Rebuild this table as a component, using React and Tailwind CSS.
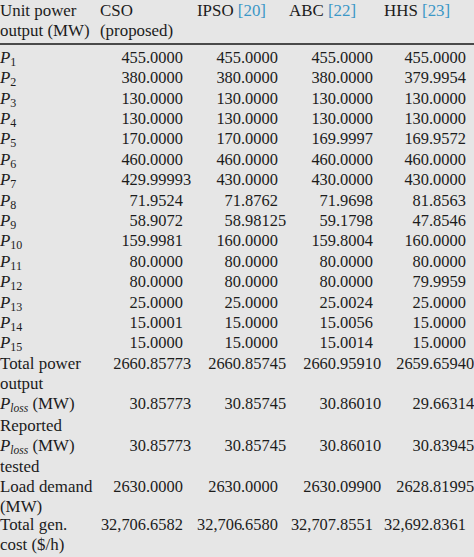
const cols = [
  { left: 100, int: 46 },
  { left: 197, int: 44 },
  { left: 289, int: 47 },
  { left: 384, int: 45 },
];

const rows = [
  ["1", "455.0000", "455.0000", "455.0000", "455.0000"],
  ["2", "380.0000", "380.0000", "380.0000", "379.9954"],
  ["3", "130.0000", "130.0000", "130.0000", "130.0000"],
  ["4", "130.0000", "130.0000", "130.0000", "130.0000"],
  ["5", "170.0000", "170.0000", "169.9997", "169.9572"],
  ["6", "460.0000", "460.0000", "460.0000", "460.0000"],
  ["7", "429.99993", "430.0000", "430.0000", "430.0000"],
  ["8", "71.9524", "71.8762", "71.9698", "81.8563"],
  ["9", "58.9072", "58.98125", "59.1798", "47.8546"],
  ["10", "159.9981", "160.0000", "159.8004", "160.0000"],
  ["11", "80.0000", "80.0000", "80.0000", "80.0000"],
  ["12", "80.0000", "80.0000", "80.0000", "79.9959"],
  ["13", "25.0000", "25.0000", "25.0024", "25.0000"],
  ["14", "15.0001", "15.0000", "15.0056", "15.0000"],
  ["15", "15.0000", "15.0000", "15.0014", "15.0000"],
];

function Num({ value, col }) {
  const [a, b] = value.split(".");
  return (
    <div className="flex whitespace-nowrap text-[16.4px]" style={{ width: col.int + 60 }}>
      <span className="text-right" style={{ width: col.int }}>{a}</span>
      <span>.{b}</span>
    </div>
  );
}

function Values({ values }) {
  return (
    <div className="flex">
      {values.map((v, i) => (
        <div
          key={i}
          className="shrink-0"
          style={{ width: i < 3 ? cols[i + 1].left - cols[i].left : 90 }}
        >
          <Num value={v} col={cols[i]} />
        </div>
      ))}
    </div>
  );
}

function Ref({ n }) {
  return <span className="text-[#3b97c6]">[{n}]</span>;
}

function Ploss() {
  return (
    <>
      <i>P</i>
      <i className="text-[11.5px] leading-none relative top-[3px]">loss</i> (MW)
    </>
  );
}

export default function App() {
  return (
    <div className="w-[474px] h-[557px] bg-[#e6e6e6] text-[#1c1c1c] text-[16.9px] leading-[20.4px] overflow-hidden font-['Liberation_Serif','Times_New_Roman',serif]">
      <div className="flex pt-[1px] pb-[1px] whitespace-nowrap">
        <div className="w-[100px] shrink-0">
          <div>Unit power</div>
          <div>output (MW)</div>
        </div>
        <div className="w-[97px] shrink-0">
          <div>CSO</div>
          <div>(proposed)</div>
        </div>
        <div className="w-[92px] shrink-0">
          IPSO <Ref n="20" />
        </div>
        <div className="w-[95px] shrink-0">
          ABC <Ref n="22" />
        </div>
        <div className="w-[90px] shrink-0">
          HHS <Ref n="23" />
        </div>
      </div>
      <div className="h-[2px] bg-[#4a4a4a]" />
      <div className="pt-[3px]">
        {rows.map((r) => (
          <div key={r[0]} className="flex h-[20.4px]">
            <div className="w-[100px] shrink-0">
              <i>P</i>
              <span className="text-[12px] leading-none relative top-[3px]">{r[0]}</span>
            </div>
            <Values values={r.slice(1)} />
          </div>
        ))}
        <div className="flex">
          <div className="w-[100px] shrink-0 whitespace-nowrap">
            <div>Total power</div>
            <div>output</div>
          </div>
          <Values values={["2660.85773", "2660.85745", "2660.95910", "2659.65940"]} />
        </div>
        <div className="flex h-[20.4px]">
          <div className="w-[100px] shrink-0 whitespace-nowrap">
            <Ploss />
          </div>
          <Values values={["30.85773", "30.85745", "30.86010", "29.66314"]} />
        </div>
        <div className="flex pt-[1px]">
          <div className="w-[100px] shrink-0 whitespace-nowrap">
            <div>Reported</div>
            <div className="h-[20.4px]">
              <Ploss />
            </div>
            <div>tested</div>
          </div>
          <div className="pt-[20.4px]">
            <Values values={["30.85773", "30.85745", "30.86010", "30.83945"]} />
          </div>
        </div>
        <div className="flex">
          <div className="w-[100px] shrink-0 whitespace-nowrap">
            <div>Load demand</div>
            <div>(MW)</div>
          </div>
          <Values values={["2630.0000", "2630.0000", "2630.09900", "2628.81995"]} />
        </div>
        <div className="flex -mt-[3px]">
          <div className="w-[100px] shrink-0 whitespace-nowrap">
            <div>Total gen.</div>
            <div>cost ($/h)</div>
          </div>
          <Values values={["32,706.6582", "32,706.6580", "32,707.8551", "32,692.8361"]} />
        </div>
      </div>
    </div>
  );
}
